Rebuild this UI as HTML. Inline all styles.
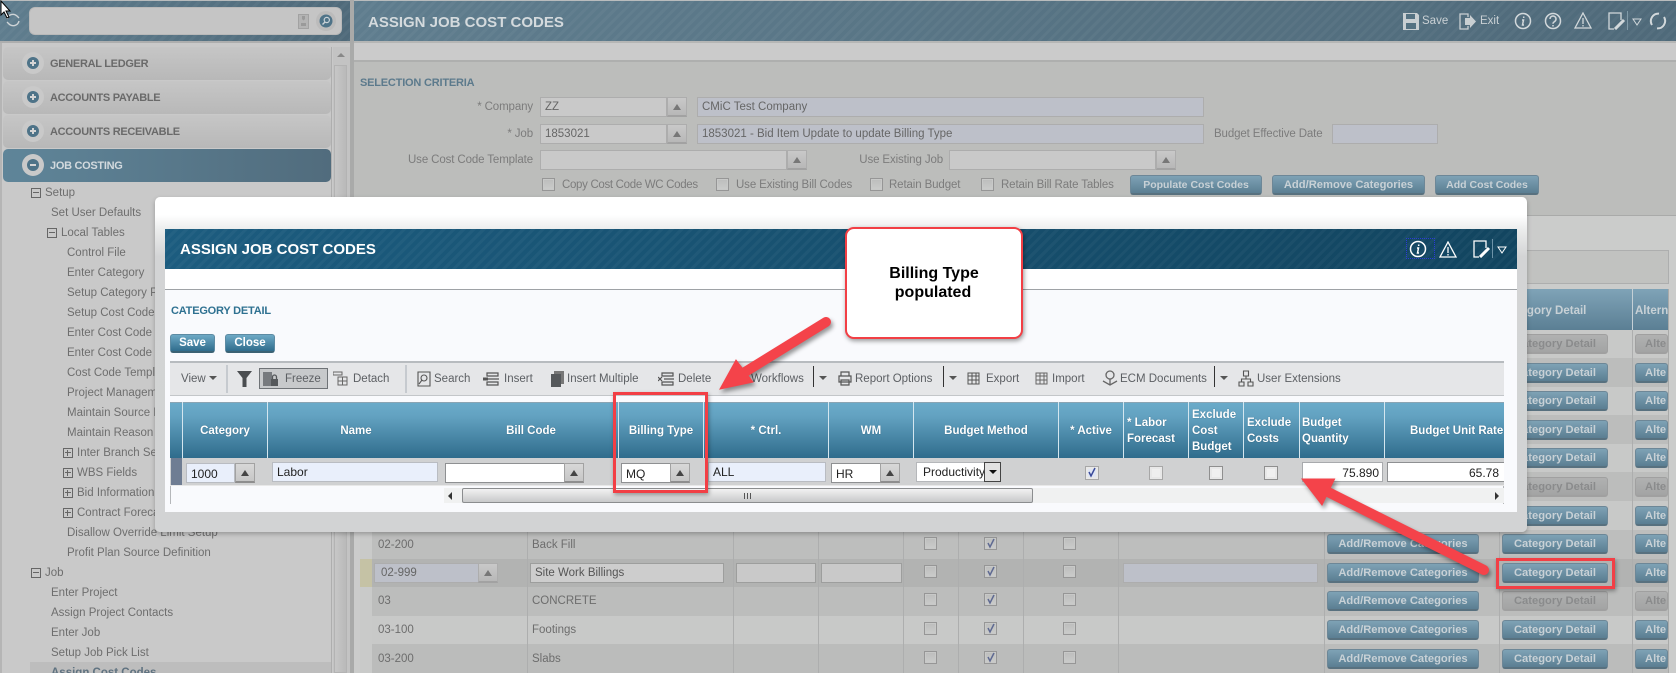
<!DOCTYPE html>
<html><head><meta charset="utf-8"><title>Assign Job Cost Codes</title>
<style>
html{margin:0;padding:0;width:1676px;height:673px;overflow:hidden}
body{margin:0;padding:0;width:1676px;height:673px;position:relative;overflow:hidden;background:#bcbdbb;font-family:"Liberation Sans",sans-serif;font-size:11.5px;color:#6e6e6e}
div,span,svg{position:absolute;box-sizing:border-box}
.t{white-space:nowrap;line-height:14px;height:14px}
.c{transform:translateX(-50%)}
.hd{background:repeating-linear-gradient(135deg,rgba(255,255,255,.035) 0 3px,transparent 3px 7px),linear-gradient(90deg,#5f7d8e,#4f6a7a)}
.acc{left:3px;width:328px;height:33px;border-radius:5px;background:linear-gradient(#c6c6c6,#b8b8b8)}
.acc b{position:absolute;left:47px;top:10px;font-size:11px;letter-spacing:-.3px;line-height:14px;color:#6a6a6a;white-space:nowrap}
.ic{left:19px;top:5px;width:22px;height:22px;border-radius:50%;background:#c9c9c9}
.ic i{position:absolute;left:5px;top:5px;width:12px;height:12px;border-radius:50%;background:#4e7388}
.ic u{position:absolute;left:8px;top:10px;width:6px;height:2px;background:#d5d5d5}
.ic s{position:absolute;left:10px;top:8px;width:2px;height:6px;background:#d5d5d5}
.bx{width:10px;height:10px;border:1px solid #666}
.bx:before{content:"";position:absolute;left:1px;top:3px;width:6px;height:2px;border-top:1px solid #666}
.bx.p:after{content:"";position:absolute;left:3px;top:1px;width:1px;height:6px;background:#666}
.inp{height:20px;background:#c9c9c9;border:1px solid #adadad}
.blu{height:20px;background:#bdc0c9;border:1px solid #adadad;color:#666;padding:2px 4px;line-height:14px;white-space:nowrap}
.ar{width:20px;height:20px;background:linear-gradient(#c9c9c9,#b8b8b8);border:1px solid #adadad;border-bottom:2px solid #a2a2a2}
.ar:after{content:"";position:absolute;left:5px;top:6px;border-left:4px solid transparent;border-right:4px solid transparent;border-bottom:6px solid #777}
.l{text-align:right;color:#7c7c7c;white-space:nowrap;line-height:14px;letter-spacing:-.12px}
.cb{width:13px;height:13px;background:linear-gradient(#bcbdbc,#cbcccb);border:1px solid #969696;box-shadow:inset 0 0 0 1px #c8c9c8}
.db{height:20px;border-radius:3px;background:linear-gradient(#7ea2b5,#5b7e92);border:1px solid #6d8797;border-bottom:2px solid #58717f;color:#c8d1d6;font-size:11.200px;font-weight:bold;text-align:center;line-height:18px;white-space:nowrap;overflow:hidden}
.db.off{background:linear-gradient(#b0b1b1,#a3a4a4);border-color:#a0a0a0;color:#8a8b8c}
.row{left:360px;width:1309px}
.v{top:0;bottom:0;width:1px;background:#adaeae}
.rt{white-space:nowrap;line-height:14px;color:#6d6d6d}
.mb{height:19px;border-radius:3px;background:linear-gradient(#6ea9c5,#2f6c8c);border:1px solid #5d8ba3;border-bottom:2px solid #3b6274;color:#fff;font-size:11.500px;font-weight:bold;text-align:center;line-height:17px}
.tb{color:#5c5f63;white-space:nowrap;line-height:14px;height:14px;top:372px}
.sep{top:365px;width:2px;height:28px;background:#c6cacf}
.dk{top:366px;width:1px;height:21px;background:#333}
.car{top:376px;border-left:4px solid transparent;border-right:4px solid transparent;border-top:4px solid #555;width:0;height:0}
.th{top:402px;height:56px;width:1px;background:#d4e6ef}
.hl{color:#fff;font-weight:bold;white-space:nowrap;line-height:16px;text-shadow:0 0 1px rgba(0,40,60,.5)}
.wi{height:20px;background:#fff;border:1px solid #8e9092;color:#222;padding:3px 4px;line-height:14px;font-size:12px}
.wa{width:20px;height:20px;background:linear-gradient(#d8d8d8,#c6c6c6);border:1px solid #a2a2a2;border-bottom:2px solid #8e8e8e}
.wa:after{content:"";position:absolute;left:5px;top:6px;border-left:4px solid transparent;border-right:4px solid transparent;border-bottom:6px solid #444}
.mc{width:14px;height:14px;top:466px;background:#f0f0f0;border:1px solid #a7a7a7;box-shadow:inset 0 0 0 2px #e8e8e8}
.red{border:3px solid #f23f45;box-shadow:1px 2px 4px rgba(0,0,0,.35)}
.ck{width:10px;height:11px}
</style></head><body>
<!-- sidebar -->
<div style="left:0;top:0;width:350px;height:673px;background:#c9c9c9"></div>
<div style="left:0;top:40px;width:2px;height:633px;background:#b5b5b5"></div>
<div class="hd" style="left:0;top:1px;width:350px;height:40px"></div>
<div style="left:0;top:0;width:1676px;height:1px;background:#b9bcbd"></div>
<div style="left:0;top:41px;width:350px;height:2px;background:#adaeae"></div>
<div style="left:30px;top:8px;width:311px;height:26px;border-radius:5px;background:#c5c5c5;box-shadow:0 0 0 1px #b9b9b9"></div>
<svg style="left:298px;top:14px" width="11" height="15" viewBox="0 0 11 15"><path d="M.5.500h10v14H.500z" fill="#b4b4b4" stroke="#a2a2a2"/><path d="M4 2h3v3l-1.500 1.500L4 5zM3 9h5v3H3z" fill="#9a9a9a"/></svg>
<div style="left:316px;top:11px;width:20px;height:20px;border-radius:50%;background:#bbb"></div>
<svg style="left:319px;top:14px" width="14" height="14" viewBox="0 0 14 14"><circle cx="7" cy="7" r="6.500" fill="#4e7388"/><circle cx="7.800" cy="6" r="2.600" fill="none" stroke="#c9d2d7" stroke-width="1.200"/><path d="M6 8L3.500 10.500" stroke="#c9d2d7" stroke-width="1.400"/></svg>
<svg style="left:5px;top:12px" width="16" height="16" viewBox="0 0 16 16" fill="none" stroke="#cfd4d7" stroke-width="1.400"><path d="M2 7a6 6 0 0 1 10-3l2 2M14 9a6 6 0 0 1-10 3l-2-2"/></svg>
<svg style="left:0;top:0" width="12" height="20" viewBox="0 0 12 20"><path d="M1 1v14l3-3 3 6 2-1-3-6h4z" fill="#fff" stroke="#000"/></svg>

<div class="acc" style="top:47px"><div class="ic"><i></i><u></u><s></s></div><b>GENERAL LEDGER</b></div>
<div class="acc" style="top:81px"><div class="ic"><i></i><u></u><s></s></div><b>ACCOUNTS PAYABLE</b></div>
<div class="acc" style="top:115px"><div class="ic"><i></i><u></u><s></s></div><b>ACCOUNTS RECEIVABLE</b></div>
<div class="acc" style="top:149px;background:linear-gradient(90deg,#5f8599,#516c7d)"><div class="ic"><i></i><u></u></div><b style="color:#d3dade">JOB COSTING</b></div>

<div style="left:331px;top:47px;width:1px;height:626px;background:#aeaeae"></div>
<div style="left:333px;top:47px;width:17px;height:626px;background:#c3c3c3"></div>
<div style="left:334px;top:65px;width:13px;height:608px;background:linear-gradient(90deg,#c7c7c7,#b9b9b9);border:1px solid #b3b3b3"></div>
<div style="left:337px;top:53px;width:0;height:0;border-left:4px solid transparent;border-right:4px solid transparent;border-bottom:4px solid #888"></div>
<div style="left:350px;top:0;width:4px;height:673px;background:#a9aaa9"></div>

<div class="bx" style="left:31px;top:188px"></div><div class="t" style="left:45px;top:186px">Setup</div>
<div class="t" style="left:51px;top:206px">Set User Defaults</div>
<div class="bx" style="left:47px;top:228px"></div><div class="t" style="left:61px;top:226px">Local Tables</div>
<div class="t" style="left:67px;top:246px">Control File</div>
<div class="t" style="left:67px;top:266px">Enter Category</div>
<div class="t" style="left:67px;top:286px">Setup Category P</div>
<div class="t" style="left:67px;top:306px">Setup Cost Code</div>
<div class="t" style="left:67px;top:326px">Enter Cost Code</div>
<div class="t" style="left:67px;top:346px">Enter Cost Code T</div>
<div class="t" style="left:67px;top:366px">Cost Code Templ</div>
<div class="t" style="left:67px;top:386px">Project Managem</div>
<div class="t" style="left:67px;top:406px">Maintain Source I</div>
<div class="t" style="left:67px;top:426px">Maintain Reason</div>
<div class="bx p" style="left:63px;top:448px"></div><div class="t" style="left:77px;top:446px">Inter Branch Se</div>
<div class="bx p" style="left:63px;top:468px"></div><div class="t" style="left:77px;top:466px">WBS Fields</div>
<div class="bx p" style="left:63px;top:488px"></div><div class="t" style="left:77px;top:486px">Bid Information</div>
<div class="bx p" style="left:63px;top:508px"></div><div class="t" style="left:77px;top:506px">Contract Foreca</div>
<div class="t" style="left:67px;top:526px">Disallow Override Limit Setup</div>
<div class="t" style="left:67px;top:546px">Profit Plan Source Definition</div>
<div class="bx" style="left:31px;top:568px"></div><div class="t" style="left:45px;top:566px">Job</div>
<div class="t" style="left:51px;top:586px">Enter Project</div>
<div class="t" style="left:51px;top:606px">Assign Project Contacts</div>
<div class="t" style="left:51px;top:626px">Enter Job</div>
<div class="t" style="left:51px;top:646px">Setup Job Pick List</div>
<div style="left:30px;top:662px;width:301px;height:11px;background:#bdbdbd"></div>
<div class="t" style="left:51px;top:666px;font-weight:bold;color:#5f7280">Assign Cost Codes</div>

<!-- main header -->
<div class="hd" style="left:354px;top:1px;width:1322px;height:40px"></div>
<div style="left:354px;top:41px;width:1322px;height:21px;background:#cbcbcb;border-top:2px solid #b5b6b5;border-bottom:2px solid #aeafae"></div>
<div class="t" style="left:368px;top:14px;height:18px;line-height:18px;font-size:15px;font-weight:bold;color:#d4dadd">ASSIGN JOB COST CODES</div>

<svg style="left:1403px;top:13px" width="16" height="17" viewBox="0 0 16 17"><path d="M0 0h14l2 2v15H0z" fill="#c9cfd2"/><path d="M3 1h9v5H3zM3 10h10v6H3z" fill="#557282"/></svg>
<div class="t" style="left:1422px;top:14px;color:#c9d0d4">Save</div>
<svg style="left:1459px;top:13px" width="18" height="17" viewBox="0 0 18 17" fill="none" stroke="#c9cfd2" stroke-width="1.300"><path d="M9 4V1H1v15h8v-3"/><path d="M6 5h5V2l6 6.500-6 6.500v-3H6z" fill="#c9cfd2" stroke="none"/></svg>
<div class="t" style="left:1480px;top:14px;color:#c9d0d4">Exit</div>
<svg style="left:1514px;top:12px" width="18" height="18" viewBox="0 0 18 18" fill="none" stroke="#d2d8db" stroke-width="1.500"><circle cx="9" cy="9" r="7.500"/><path d="M8 8h1.500l-1 5h1.500M9.700 4.500v1.500"/></svg>
<svg style="left:1544px;top:12px" width="18" height="18" viewBox="0 0 18 18" fill="none" stroke="#d2d8db" stroke-width="1.500"><circle cx="9" cy="9" r="7.500"/><path d="M6 7a3 3 0 1 1 4.500 2.600c-1 .6-1.500 1-1.500 2.200M9 13v1.500"/></svg>
<svg style="left:1574px;top:12px" width="18" height="17" viewBox="0 0 18 17" fill="none" stroke="#d2d8db" stroke-width="1.300"><path d="M9 1l8 15H1zM9 6v6M9 13v1.500"/></svg>
<svg style="left:1608px;top:12px" width="18" height="18" viewBox="0 0 18 18" fill="none" stroke="#d2d8db" stroke-width="1.300"><path d="M6 17H1V1h12v7"/><path d="M7 17l9-9" stroke-width="3"/></svg>
<div style="left:1627px;top:11px;width:1px;height:19px;background:#809aa8"></div>
<svg style="left:1632px;top:18px" width="10" height="8" viewBox="0 0 10 8" fill="none" stroke="#d2d8db"><path d="M1 1h8L5 7z"/></svg>
<svg style="left:1649px;top:12px" width="18" height="18" viewBox="0 0 18 18" fill="none" stroke="#d2d8db" stroke-width="2"><path d="M3 13a7.500 7.500 0 0 1 7-11.400M15 5a7.500 7.500 0 0 1-7 11.400"/></svg>

<!-- selection criteria -->
<div class="t" style="left:360px;top:76px;font-weight:bold;font-size:11px;letter-spacing:-.2px;color:#5c7a8c">SELECTION CRITERIA</div>
<div class="l" style="right:1143px;top:100px">* Company</div>
<div class="inp" style="left:540px;top:97px;width:127px;padding:2px 4px;line-height:14px;color:#666">ZZ</div><div class="ar" style="left:667px;top:97px"></div>
<div class="blu" style="left:697px;top:97px;width:507px">CMiC Test Company</div>
<div class="l" style="right:1143px;top:127px">* Job</div>
<div class="inp" style="left:540px;top:124px;width:127px;padding:2px 4px;line-height:14px;color:#666">1853021</div><div class="ar" style="left:667px;top:124px"></div>
<div class="blu" style="left:697px;top:124px;width:507px">1853021 - Bid Item Update to update Billing Type</div>
<div class="l" style="left:1214px;top:127px">Budget Effective Date</div>
<div class="blu" style="left:1332px;top:124px;width:106px"></div>
<div class="l" style="right:1143px;top:153px">Use Cost Code Template</div>
<div class="inp" style="left:540px;top:150px;width:247px"></div><div class="ar" style="left:787px;top:150px"></div>
<div class="l" style="right:733px;top:153px">Use Existing Job</div>
<div class="inp" style="left:949px;top:150px;width:207px"></div><div class="ar" style="left:1156px;top:150px"></div>
<div class="cb" style="left:542px;top:178px"></div><div class="l" style="left:562px;top:178px;letter-spacing:-.32px">Copy Cost Code WC Codes</div>
<div class="cb" style="left:716px;top:178px"></div><div class="l" style="left:736px;top:178px">Use Existing Bill Codes</div>
<div class="cb" style="left:870px;top:178px"></div><div class="l" style="left:889px;top:178px">Retain Budget</div>
<div class="cb" style="left:981px;top:178px"></div><div class="l" style="left:1001px;top:178px">Retain Bill Rate Tables</div>
<div class="db" style="left:1130px;top:175px;width:132px;font-size:10.500px">Populate Cost Codes</div>
<div class="db" style="left:1272px;top:175px;width:153px">Add/Remove Categories</div>
<div class="db" style="left:1435px;top:175px;width:104px;font-size:10.500px">Add Cost Codes</div>

<div style="left:354px;top:215px;width:1322px;height:458px;background:#cbcccb;border-top:1px solid #a9aaa9"></div>
<div style="left:360px;top:250px;width:1309px;height:34px;background:#c1c2c0;border:1px solid #adaeae"></div>

<!-- table header behind -->
<div style="left:360px;top:289px;width:1309px;height:41px;background:linear-gradient(#7fa3b7,#5b7f94)"></div>
<div style="left:1632px;top:289px;width:1px;height:41px;background:#c5d0d6"></div>
<div class="t" style="left:1502px;top:304px;font-weight:bold;color:#c8d1d6">Category Detail</div>
<div class="t" style="left:1635px;top:304px;width:34px;overflow:hidden;font-weight:bold;color:#c8d1d6">Alternate</div>

<!-- rows -->
<div class="row" style="top:330px;height:28px;background:#c8c9c8"></div>
<div class="row" style="top:358px;height:29px;background:#bcbdbc"></div>
<div class="row" style="top:387px;height:28px;background:#c8c9c8"></div>
<div class="row" style="top:415px;height:29px;background:#bcbdbc"></div>
<div class="row" style="top:444px;height:28px;background:#c8c9c8"></div>
<div class="row" style="top:472px;height:29px;background:#bcbdbc"></div>
<div class="row" style="top:501px;height:29px;background:#c8c9c8"></div>
<div class="row" style="top:530px;height:29px;background:#bdbebd"></div>
<div class="row" style="top:559px;height:28px;background:#b2b3b2"></div>
<div class="row" style="top:587px;height:29px;background:#bcbdbc"></div>
<div class="row" style="top:616px;height:28px;background:#c8c9c8"></div>
<div class="row" style="top:644px;height:29px;background:#bbbcbb"></div>
<div style="left:360px;top:530px;width:12px;height:143px;background:#c9cac9"></div>
<div style="left:360px;top:559px;width:12px;height:28px;background:#c5c2a5"></div>
<div class="v" style="left:527px;top:330px;height:343px"></div>
<div class="v" style="left:733px;top:330px;height:343px"></div>
<div class="v" style="left:818px;top:330px;height:343px"></div>
<div class="v" style="left:903px;top:330px;height:343px"></div>
<div class="v" style="left:958px;top:330px;height:343px"></div>
<div class="v" style="left:1023px;top:330px;height:343px"></div>
<div class="v" style="left:1118px;top:330px;height:343px"></div>
<div class="v" style="left:1324px;top:330px;height:343px"></div>
<div class="v" style="left:1499px;top:330px;height:343px"></div>
<div class="v" style="left:1632px;top:330px;height:343px"></div>
<div style="left:1668px;top:289px;width:1px;height:384px;background:#a9aaa9"></div>

<div class="rt" style="left:378px;top:538px">02-200</div><div class="rt" style="left:532px;top:538px">Back Fill</div>
<div class="blu" style="left:374px;top:563px;width:105px;height:20px;padding-left:6px">02-999</div><div class="ar" style="left:478px;top:563px"></div>
<div class="inp" style="left:530px;top:563px;width:194px;padding:2px 4px;line-height:14px;background:#cdcdcd;border-color:#9d9e9d;color:#555">Site Work Billings</div>
<div class="inp" style="left:736px;top:563px;width:80px;border-color:#9d9e9d"></div>
<div class="inp" style="left:821px;top:563px;width:81px;border-color:#9d9e9d"></div>
<div class="blu" style="left:1123px;top:563px;width:195px"></div>
<div class="rt" style="left:378px;top:594px">03</div><div class="rt" style="left:532px;top:594px">CONCRETE</div>
<div class="rt" style="left:378px;top:623px">03-100</div><div class="rt" style="left:532px;top:623px">Footings</div>
<div class="rt" style="left:378px;top:652px">03-200</div><div class="rt" style="left:532px;top:652px">Slabs</div>

<div class="cb" style="left:924px;top:537px"></div><div class="cb" style="left:984px;top:537px"></div><div class="cb" style="left:1063px;top:537px"></div>
<div class="cb" style="left:924px;top:565px"></div><div class="cb" style="left:984px;top:565px"></div><div class="cb" style="left:1063px;top:565px"></div>
<div class="cb" style="left:924px;top:593px"></div><div class="cb" style="left:984px;top:593px"></div><div class="cb" style="left:1063px;top:593px"></div>
<div class="cb" style="left:924px;top:622px"></div><div class="cb" style="left:984px;top:622px"></div><div class="cb" style="left:1063px;top:622px"></div>
<div class="cb" style="left:924px;top:651px"></div><div class="cb" style="left:984px;top:651px"></div><div class="cb" style="left:1063px;top:651px"></div>
<svg class="ck" style="left:986px;top:538px" viewBox="0 0 10 11" fill="none" stroke="#5f6a92" stroke-width="1.500"><path d="M2 5l2 4 4-8"/></svg>
<svg class="ck" style="left:986px;top:566px" viewBox="0 0 10 11" fill="none" stroke="#5f6a92" stroke-width="1.500"><path d="M2 5l2 4 4-8"/></svg>
<svg class="ck" style="left:986px;top:594px" viewBox="0 0 10 11" fill="none" stroke="#5f6a92" stroke-width="1.500"><path d="M2 5l2 4 4-8"/></svg>
<svg class="ck" style="left:986px;top:623px" viewBox="0 0 10 11" fill="none" stroke="#5f6a92" stroke-width="1.500"><path d="M2 5l2 4 4-8"/></svg>
<svg class="ck" style="left:986px;top:652px" viewBox="0 0 10 11" fill="none" stroke="#5f6a92" stroke-width="1.500"><path d="M2 5l2 4 4-8"/></svg>

<div class="db" style="left:1327px;top:534px;width:152px">Add/Remove Categories</div>
<div class="db" style="left:1327px;top:563px;width:152px">Add/Remove Categories</div>
<div class="db" style="left:1327px;top:591px;width:152px">Add/Remove Categories</div>
<div class="db" style="left:1327px;top:620px;width:152px">Add/Remove Categories</div>
<div class="db" style="left:1327px;top:649px;width:152px">Add/Remove Categories</div>

<div class="db off" style="left:1502px;top:334px;width:106px">Category Detail</div><div class="db off" style="left:1635px;top:334px;width:33px;text-align:left;padding-left:9px">Alte</div>
<div class="db" style="left:1502px;top:363px;width:106px">Category Detail</div><div class="db" style="left:1635px;top:363px;width:33px;text-align:left;padding-left:9px">Alte</div>
<div class="db" style="left:1502px;top:391px;width:106px">Category Detail</div><div class="db" style="left:1635px;top:391px;width:33px;text-align:left;padding-left:9px">Alte</div>
<div class="db" style="left:1502px;top:420px;width:106px">Category Detail</div><div class="db" style="left:1635px;top:420px;width:33px;text-align:left;padding-left:9px">Alte</div>
<div class="db" style="left:1502px;top:448px;width:106px">Category Detail</div><div class="db" style="left:1635px;top:448px;width:33px;text-align:left;padding-left:9px">Alte</div>
<div class="db off" style="left:1502px;top:477px;width:106px">Category Detail</div><div class="db off" style="left:1635px;top:477px;width:33px;text-align:left;padding-left:9px">Alte</div>
<div class="db" style="left:1502px;top:506px;width:106px">Category Detail</div><div class="db" style="left:1635px;top:506px;width:33px;text-align:left;padding-left:9px">Alte</div>
<div class="db" style="left:1502px;top:534px;width:106px">Category Detail</div><div class="db" style="left:1635px;top:534px;width:33px;text-align:left;padding-left:9px">Alte</div>
<div class="db" style="left:1502px;top:563px;width:106px">Category Detail</div><div class="db" style="left:1635px;top:563px;width:33px;text-align:left;padding-left:9px">Alte</div>
<div class="db off" style="left:1502px;top:591px;width:106px">Category Detail</div><div class="db off" style="left:1635px;top:591px;width:33px;text-align:left;padding-left:9px">Alte</div>
<div class="db" style="left:1502px;top:620px;width:106px">Category Detail</div><div class="db" style="left:1635px;top:620px;width:33px;text-align:left;padding-left:9px">Alte</div>
<div class="db" style="left:1502px;top:649px;width:106px">Category Detail</div><div class="db" style="left:1635px;top:649px;width:33px;text-align:left;padding-left:9px">Alte</div>

<!-- modal -->
<div style="left:155px;top:197px;width:1372px;height:335px;border-radius:5px;background:linear-gradient(#fff 0,#fff 18px,#eceded 32px,#d3d4d5 60px,#d2d3d4 100%);box-shadow:0 2px 5px rgba(0,0,0,.25)"></div>
<div style="left:165px;top:269px;width:1352px;height:243px;background:#f9fafd"></div>
<div style="left:165px;top:269px;width:1352px;height:21px;background:#fff;border-bottom:1px solid #9ea2a6"></div>
<div class="hd" style="left:165px;top:229px;width:1352px;height:40px;background:repeating-linear-gradient(135deg,rgba(255,255,255,.035) 0 3px,transparent 3px 7px),linear-gradient(90deg,#1c5c7f,#124560)"></div>
<div class="t" style="left:180px;top:241px;height:18px;line-height:18px;font-size:15px;font-weight:bold;color:#fff">ASSIGN JOB COST CODES</div>
<div style="left:1406px;top:238px;width:29px;height:21px;border:1px dotted #2b3bd6"></div>
<svg style="left:1409px;top:240px" width="18" height="18" viewBox="0 0 18 18" fill="none" stroke="#fff" stroke-width="1.500"><circle cx="9" cy="9" r="7.500"/><path d="M8 8h1.500l-1 5h1.500M9.700 4.500v1.500"/></svg>
<svg style="left:1439px;top:241px" width="18" height="17" viewBox="0 0 18 17" fill="none" stroke="#fff" stroke-width="1.300"><path d="M9 1l8 15H1zM9 6v6M9 13v1.500"/></svg>
<svg style="left:1473px;top:240px" width="18" height="18" viewBox="0 0 18 18" fill="none" stroke="#fff" stroke-width="1.300"><path d="M6 17H1V1h12v7"/><path d="M7 17l9-9" stroke-width="3"/></svg>
<div style="left:1492px;top:239px;width:1px;height:19px;background:#6d93a8"></div>
<svg style="left:1497px;top:246px" width="10" height="8" viewBox="0 0 10 8" fill="none" stroke="#fff"><path d="M1 1h8L5 7z"/></svg>

<div class="t" style="left:171px;top:304px;font-weight:bold;font-size:11px;letter-spacing:-.2px;color:#2f7191">CATEGORY DETAIL</div>
<div class="mb" style="left:170px;top:334px;width:45px">Save</div>
<div class="mb" style="left:225px;top:334px;width:50px">Close</div>

<!-- toolbar -->
<div style="left:170px;top:361px;width:1334px;height:35px;background:#e5e6e8;border-top:2px solid #b7bbbf;border-bottom:1px solid #c3c6c9"></div>
<div class="tb" style="left:181px">View</div><div class="car" style="left:209px"></div>
<div class="sep" style="left:226px"></div>
<svg style="left:237px;top:371px" width="15" height="16" viewBox="0 0 15 16"><path d="M0 0h15L9.500 7v9h-4V7z" fill="#4a4d50"/></svg>
<div style="left:259px;top:368px;width:69px;height:21px;background:#c7c9cb;border:1px solid #6f7377"></div>
<svg style="left:263px;top:371px" width="16" height="16" viewBox="0 0 16 16"><path d="M0 1h9v14H0z" fill="#777a7e"/><path d="M8 8h7v7H8z" fill="#55585b"/><path d="M9.500 8V6a2 2 0 0 1 4 0v2" fill="none" stroke="#55585b" stroke-width="1.300"/></svg>
<div class="tb" style="left:285px">Freeze</div>
<svg style="left:333px;top:371px" width="15" height="15" viewBox="0 0 15 15" fill="none" stroke="#666"><path d="M0 1h9v3H0zM5 6h9v8H5zM5 10h9M9.500 6v8"/></svg>
<div class="tb" style="left:353px">Detach</div>
<div class="sep" style="left:405px"></div>
<svg style="left:417px;top:371px" width="14" height="16" viewBox="0 0 14 16" fill="none" stroke="#555" stroke-width="1.100"><path d="M1 1h12v14H1z"/><circle cx="7" cy="7" r="3"/><path d="M5 9l-3 4"/></svg>
<div class="tb" style="left:434px">Search</div>
<svg style="left:483px;top:372px" width="17" height="14" viewBox="0 0 17 14" fill="none" stroke="#555" stroke-width="1.200"><path d="M4 1h11v3H4zM4 10h11v3H4zM3 7h13"/><path d="M0 7h5" stroke-width="3"/></svg>
<div class="tb" style="left:504px">Insert</div>
<svg style="left:551px;top:371px" width="13" height="16" viewBox="0 0 13 16"><path d="M3 0h10v13H3z" fill="#777"/><path d="M0 3h10v13H0z" fill="#55585b"/></svg>
<div class="tb" style="left:567px">Insert Multiple</div>
<svg style="left:658px;top:372px" width="17" height="14" viewBox="0 0 17 14" fill="none" stroke="#555" stroke-width="1.200"><path d="M4 1h11v3H4zM4 10h11v3H4zM6 7h10"/><path d="M0 5l4 4M4 5L0 9"/></svg>
<div class="tb" style="left:678px">Delete</div>
<div class="tb" style="left:751px">Workflows</div>
<div class="dk" style="left:813px"></div><div class="car" style="left:819px"></div>
<svg style="left:838px;top:371px" width="14" height="15" viewBox="0 0 14 15" fill="none" stroke="#555" stroke-width="1.200"><path d="M3 5V1h8v4M1 5h12v6H1zM3 9h8v5H3z"/></svg>
<div class="tb" style="left:855px">Report Options</div>
<div class="dk" style="left:943px"></div><div class="car" style="left:949px"></div>
<svg style="left:967px;top:372px" width="14" height="14" viewBox="0 0 14 14" fill="none" stroke="#555"><path d="M1 1h11v11H1zM1 4h11M1 8h11M5 1v11M9 1v11"/></svg>
<div class="tb" style="left:986px">Export</div>
<svg style="left:1035px;top:372px" width="14" height="14" viewBox="0 0 14 14" fill="none" stroke="#666"><path d="M1 1h11v11H1zM1 4h11M1 8h11M5 1v11M9 1v11"/></svg>
<div class="tb" style="left:1052px">Import</div>
<svg style="left:1102px;top:370px" width="16" height="17" viewBox="0 0 16 17" fill="none" stroke="#666" stroke-width="1.300"><circle cx="8" cy="5" r="4"/><path d="M1 11l7 4 7-4M8 9v6"/></svg>
<div class="tb" style="left:1120px">ECM Documents</div>
<div class="dk" style="left:1214px"></div><div class="car" style="left:1220px"></div>
<svg style="left:1238px;top:370px" width="16" height="17" viewBox="0 0 16 17" fill="none" stroke="#555" stroke-width="1.100"><path d="M5.500 1h5v5h-5zM1 12h5v4H1zM10 12h5v4h-5zM8 6v3M3.500 12V9h9v3"/></svg>
<div class="tb" style="left:1257px">User Extensions</div>

<!-- modal table -->
<div style="left:170px;top:402px;width:1334px;height:56px;background:linear-gradient(#6aabca 0,#63a2c1 25%,#2f6c8c 100%)"></div>
<div style="left:170px;top:402px;width:1334px;height:1px;background:#8aa4b3"></div>
<div class="th" style="left:182px"></div><div class="th" style="left:267px"></div><div class="th" style="left:618px"></div><div class="th" style="left:703px"></div><div class="th" style="left:828px"></div><div class="th" style="left:913px"></div><div class="th" style="left:1058px"></div><div class="th" style="left:1123px"></div><div class="th" style="left:1188px"></div><div class="th" style="left:1243px"></div><div class="th" style="left:1299px"></div><div class="th" style="left:1384px"></div>
<div class="hl c" style="left:225px;top:423px">Category</div>
<div class="hl c" style="left:356px;top:423px">Name</div>
<div class="hl c" style="left:531px;top:423px">Bill Code</div>
<div class="hl c" style="left:661px;top:423px">Billing Type</div>
<div class="hl c" style="left:766px;top:423px">* Ctrl.</div>
<div class="hl c" style="left:871px;top:423px">WM</div>
<div class="hl c" style="left:986px;top:423px">Budget Method</div>
<div class="hl c" style="left:1091px;top:423px">* Active</div>
<div class="hl" style="left:1127px;top:415px">* Labor<br>Forecast</div>
<div class="hl" style="left:1192px;top:407px">Exclude<br>Cost<br>Budget</div>
<div class="hl" style="left:1247px;top:415px">Exclude<br>Costs</div>
<div class="hl" style="left:1302px;top:415px">Budget<br>Quantity</div>
<div class="hl" style="left:1410px;top:423px;width:94px;overflow:hidden">Budget Unit Rate</div>

<div style="left:170px;top:458px;width:1334px;height:28px;background:#d0d1d2;border-bottom:1px solid #e8e8e8"></div>
<div style="left:171px;top:458px;width:11px;height:27px;background:#6f7d93"></div>
<div class="wi" style="left:186px;top:463px;width:49px;background:#e9effb;border-color:#b9bcc2">1000</div><div class="wa" style="left:235px;top:463px"></div>
<div class="wi" style="left:272px;top:462px;width:166px;background:#e9effb;border-color:#b9bcc2;padding-top:2px">Labor</div>
<div class="wi" style="left:445px;top:463px;width:120px"></div><div class="wa" style="left:564px;top:463px"></div>
<div class="wi" style="left:621px;top:463px;width:50px">MQ</div><div class="wa" style="left:670px;top:463px"></div>
<div class="wi" style="left:708px;top:462px;width:118px;background:#e9effb;border-color:#b9bcc2;padding-top:2px">ALL</div>
<div class="wi" style="left:831px;top:463px;width:50px">HR</div><div class="wa" style="left:880px;top:463px"></div>
<div class="wi" style="left:916px;top:462px;width:70px;overflow:hidden;padding-left:6px;padding-top:2px;border-color:#b5b7ba">Productivity</div>
<div style="left:984px;top:462px;width:17px;height:20px;background:#e2e2e2;border:1px solid #444"></div>
<div style="left:989px;top:470px;width:0;height:0;border-left:4px solid transparent;border-right:4px solid transparent;border-top:4px solid #111"></div>
<div class="mc" style="left:1085px;background:#dfe5f3"></div>
<svg style="left:1087px;top:467px" width="10" height="11" viewBox="0 0 10 11" fill="none" stroke="#3a4a9a" stroke-width="1.500"><path d="M2 5l2 4 4-8"/></svg>
<div class="mc" style="left:1149px;background:#efefef"></div>
<div class="mc" style="left:1209px;border-color:#8f8f8f"></div>
<div class="mc" style="left:1264px;border-color:#8f8f8f"></div>
<div class="wi" style="left:1302px;top:462px;width:81px;text-align:right;padding-top:3px;padding-right:3px;border-color:#a8aaad">75.890</div>
<div class="wi" style="left:1387px;top:462px;width:117px;overflow:hidden;border-right:0;padding:0"><span style="left:81px;top:3px;white-space:nowrap">65.78</span></div>

<div style="left:170px;top:486px;width:1px;height:18px;background:#b5b7ba"></div>
<div style="left:1503px;top:486px;width:1px;height:18px;background:#b5b7ba"></div>
<div style="left:444px;top:488px;width:1060px;height:15px;background:#f0f1f1"></div>
<div style="left:462px;top:488px;width:571px;height:15px;background:linear-gradient(#f2f2f2,#c8c9ca);border:1px solid #8b8d8f;border-radius:2px"></div>
<div style="left:448px;top:492px;width:0;height:0;border-top:4px solid transparent;border-bottom:4px solid transparent;border-right:4px solid #333"></div>
<div style="left:1495px;top:492px;width:0;height:0;border-top:4px solid transparent;border-bottom:4px solid transparent;border-left:4px solid #333"></div>
<div style="left:744px;top:493px;width:8px;height:6px;background:repeating-linear-gradient(90deg,#555 0 1px,transparent 1px 3px)"></div>

<!-- annotations -->
<div class="red" style="left:613px;top:392px;width:95px;height:101px"></div>
<div class="red" style="left:1496px;top:558px;width:119px;height:31px"></div>
<div style="left:845px;top:227px;width:178px;height:112px;background:#fff;border:2px solid #f23f45;border-radius:9px;box-shadow:1px 2px 5px rgba(0,0,0,.4)"></div>
<div class="t c" style="left:934px;top:264px;height:20px;line-height:20px;font-size:16px;font-weight:bold;color:#000">Billing Type</div>
<div class="t c" style="left:933px;top:283px;height:20px;line-height:20px;font-size:16px;font-weight:bold;color:#000">populated</div>
<svg style="left:0;top:0;filter:drop-shadow(2px 3px 2px rgba(0,0,0,.4))" width="1676" height="673" viewBox="0 0 1676 673"><g fill="#f4434a" stroke="#f4434a" stroke-linecap="round"><path d="M826 322L745 372" stroke-width="10"/><path d="M720 389L736 360L753 382z" stroke-width="1"/><path d="M1484 570L1326 491" stroke-width="10"/><path d="M1302 479L1334.600 479L1322 505z" stroke-width="1"/></g></svg>
</body></html>
